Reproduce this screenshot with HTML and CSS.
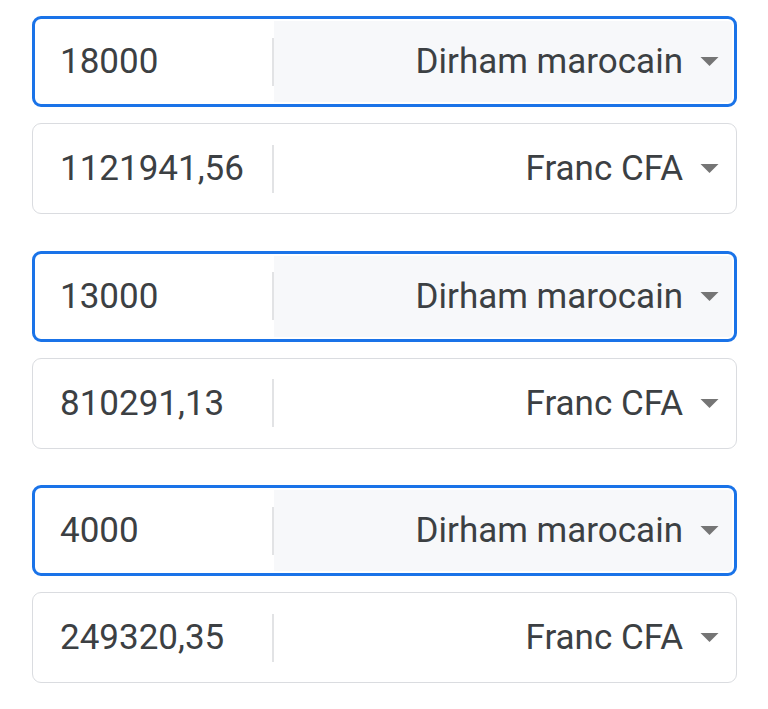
FILE: index.html
```html
<!DOCTYPE html>
<html lang="fr">

<head>
    <meta charset="UTF-8">
    <meta name="viewport" content="width=device-width, initial-scale=1.0">
    <title>Convertisseur de devises</title>
    <link rel="stylesheet" href="styles.css">
</head>

<body>

    <div class="converter">

        <!-- Conversion 1 -->
        <div class="pair">
            <div class="field field-active">
                <div class="amount">18000</div>
                <div class="divider"></div>
                <div class="unit">
                    <span>Dirham marocain</span>
                    <svg class="arrow" viewBox="0 0 10 5"><path d="M0 0L5 5L10 0z" /></svg>
                </div>
            </div>
            <div class="field">
                <div class="amount">1121941,56</div>
                <div class="divider"></div>
                <div class="unit">
                    <span>Franc CFA</span>
                    <svg class="arrow" viewBox="0 0 10 5"><path d="M0 0L5 5L10 0z" /></svg>
                </div>
            </div>
        </div>

        <!-- Conversion 2 -->
        <div class="pair">
            <div class="field field-active">
                <div class="amount">13000</div>
                <div class="divider"></div>
                <div class="unit">
                    <span>Dirham marocain</span>
                    <svg class="arrow" viewBox="0 0 10 5"><path d="M0 0L5 5L10 0z" /></svg>
                </div>
            </div>
            <div class="field">
                <div class="amount">810291,13</div>
                <div class="divider"></div>
                <div class="unit">
                    <span>Franc CFA</span>
                    <svg class="arrow" viewBox="0 0 10 5"><path d="M0 0L5 5L10 0z" /></svg>
                </div>
            </div>
        </div>

        <!-- Conversion 3 -->
        <div class="pair">
            <div class="field field-active">
                <div class="amount">4000</div>
                <div class="divider"></div>
                <div class="unit">
                    <span>Dirham marocain</span>
                    <svg class="arrow" viewBox="0 0 10 5"><path d="M0 0L5 5L10 0z" /></svg>
                </div>
            </div>
            <div class="field">
                <div class="amount">249320,35</div>
                <div class="divider"></div>
                <div class="unit">
                    <span>Franc CFA</span>
                    <svg class="arrow" viewBox="0 0 10 5"><path d="M0 0L5 5L10 0z" /></svg>
                </div>
            </div>
        </div>

        <div class="bottom-line"></div>
    </div>

</body>

</html>
```

FILE: styles.css
```css
body {
    font-family: Roboto, 'Noto Sans', Arial, sans-serif;
    background-color: #fff;
    color: #3c4043;
    margin: 0;
    padding: 0;
}

.converter {
    padding: 16px 31px 0 32px;
}

.pair {
    display: flex;
    flex-direction: column;
    gap: 16px;
    margin-bottom: 36.5px;
}

.pair:last-of-type {
    margin-bottom: 0;
}

.field {
    display: flex;
    height: 91px;
    box-sizing: border-box;
    border: 1px solid #dadce0;
    border-radius: 9px;
    padding: 4px;
}

/* focused input: thick blue outline, grey select */
.field-active {
    border: 3px solid #1a73e8;
    padding: 2px;
}

.amount {
    flex: 0 0 235px;
    display: flex;
    align-items: center;
    padding-left: 23px;
    box-sizing: border-box;
    font-size: 35px;
}

.divider {
    flex: 0 0 2px;
    align-self: center;
    height: 48px;
    background-color: #e2e3e5;
}

.unit {
    flex: 1;
    display: flex;
    align-items: center;
    justify-content: flex-end;
    gap: 17px;
    padding-right: 13px;
    font-size: 35px;
    border-radius: 0 4px 4px 0;
}

.field-active .unit {
    background-color: #f7f8fa;
}

.arrow {
    width: 19px;
    height: 9px;
    fill: #757575;
}

.bottom-line {
    margin: 24px 32px 0 32px;
    height: 1px;
    background-color: #f2f2f2;
}
```
